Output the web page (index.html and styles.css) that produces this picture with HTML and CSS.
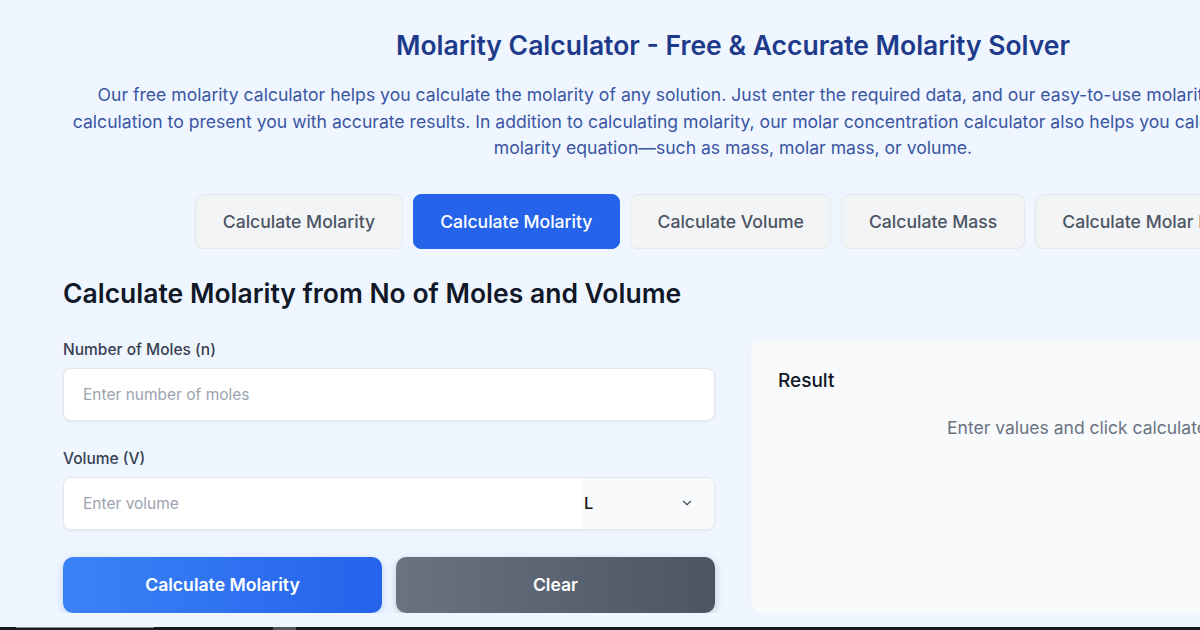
FILE: index.html
```html
<!DOCTYPE html>
<html lang="en">
<head>
<meta charset="utf-8">
<title>Molarity Calculator</title>
<link rel="stylesheet" href="styles.css">
</head>
<body>
<div class="page">
  <header class="intro">
    <h1 class="title">Molarity Calculator - Free &amp; Accurate Molarity Solver</h1>
    <p class="lead">Our free molarity calculator helps you calculate the molarity of any solution. Just enter the required data, and our easy-to-use molarity tool then does the<br>calculation to present you with accurate results. In addition to calculating molarity, our molar concentration calculator also helps you calculate key values in the<br>molarity equation—such as mass, molar mass, or volume.</p>
  </header>

  <nav class="tabs">
    <button class="tab">Calculate Molarity</button>
    <button class="tab active">Calculate Molarity</button>
    <button class="tab">Calculate Volume</button>
    <button class="tab">Calculate Mass</button>
    <button class="tab">Calculate Molar Mass</button>
  </nav>

  <h2 class="calc-title">Calculate Molarity from No of Moles and Volume</h2>

  <main class="calc">
    <section class="form">
      <div class="field">
        <label class="label">Number of Moles (n)</label>
        <div class="input-box">
          <input class="input" type="text" placeholder="Enter number of moles">
        </div>
      </div>
      <div class="field last">
        <label class="label">Volume (V)</label>
        <div class="input-box">
          <input class="input" type="text" placeholder="Enter volume">
          <div class="unit">
            <span class="unit-value">L</span>
            <svg class="chevron" width="14" height="14" viewBox="0 0 24 24" fill="none" stroke="currentColor" stroke-width="2.2" stroke-linecap="round" stroke-linejoin="round"><path d="M6 9l6 6 6-6"/></svg>
          </div>
        </div>
      </div>
      <div class="actions">
        <button class="btn btn-primary">Calculate Molarity</button>
        <button class="btn btn-secondary">Clear</button>
      </div>
    </section>

    <aside class="result">
      <h3 class="result-title">Result</h3>
      <p class="result-empty">Enter values and click calculate</p>
    </aside>
  </main>
</div>
<div class="taskbar"><span class="tb-tab"></span><span class="tb-item"></span></div>
</body>
</html>
```

FILE: styles.css
```css
html, body {
  margin: 0;
  padding: 0;
  overflow: hidden;
}
body {
  background: #eff6ff;
  font-family: Inter, "Noto Sans", "Liberation Sans", sans-serif;
  color: #111827;
}
.page {
  width: 1466px;
  box-sizing: border-box;
  padding: 0 63px;
}
.intro {
  text-align: center;
  padding-top: 28px;
}
.title {
  margin: 0;
  font-size: 26.5px;
  line-height: 34px;
  font-weight: 600;
  color: #1e3a8a;
}
.lead {
  margin: 20px 0 0;
  font-size: 17.6px;
  line-height: 26.5px;
  color: #3a55a2;
  white-space: nowrap;
}
.tabs {
  display: flex;
  justify-content: center;
  gap: 10px;
  margin-top: 32px;
}
.tab {
  height: 55px;
  padding: 0 26.5px;
  border: 1px solid #e5e7eb;
  border-radius: 8px;
  background: #f3f4f6;
  color: #4b5563;
  font-family: inherit;
  font-size: 17.6px;
  font-weight: 500;
  white-space: nowrap;
  flex-shrink: 0;
}
.tab.active {
  background: #2563eb;
  border-color: #2563eb;
  color: #ffffff;
}
.calc-title {
  margin: 27px 0 0;
  font-size: 26.5px;
  line-height: 34px;
  font-weight: 600;
  color: #111827;
}
.calc {
  display: grid;
  grid-template-columns: 1fr 1fr;
  gap: 36px;
  margin-top: 30px;
}
.form {
  display: flex;
  flex-direction: column;
}
.field {
  display: flex;
  flex-direction: column;
  margin-bottom: 28px;
}
.field.last {
  margin-bottom: 27px;
}
.label {
  font-size: 15.5px;
  line-height: 20px;
  font-weight: 500;
  color: #374151;
  margin-bottom: 8px;
}
.input-box {
  display: flex;
  height: 53px;
  box-sizing: border-box;
  border: 1px solid #e5e7eb;
  border-radius: 8px;
  background: #ffffff;
  box-shadow: 0 1px 3px rgba(15, 23, 42, 0.06);
  overflow: hidden;
}
.input {
  flex: 1;
  min-width: 0;
  border: 0;
  outline: 0;
  background: transparent;
  padding: 0 19px;
  font-family: inherit;
  font-size: 15.5px;
  color: #111827;
}
.input::placeholder {
  color: #9ca3af;
}
.unit {
  width: 131px;
  display: flex;
  align-items: center;
  justify-content: space-between;
  background: #f9fafb;
  padding: 0 20px 0 1px;
  box-sizing: border-box;
}
.unit-value {
  font-size: 16.5px;
  font-weight: 500;
  color: #111111;
}
.chevron {
  color: #4b5563;
}
.actions {
  display: grid;
  grid-template-columns: 1fr 1fr;
  gap: 14px;
}
.btn {
  height: 56px;
  border: 0;
  border-radius: 10px;
  font-family: inherit;
  font-size: 17.6px;
  font-weight: 600;
  color: #ffffff;
}
.btn-primary {
  background: linear-gradient(90deg, #3b82f6, #2563eb);
  box-shadow: 0 3px 8px rgba(37, 99, 235, 0.25);
}
.btn-secondary {
  background: linear-gradient(90deg, #6b7280, #4b5563);
  box-shadow: 0 3px 8px rgba(55, 65, 81, 0.25);
}
.result {
  background: #f8fafc;
  border-radius: 12px;
  padding: 29px 27px 24px;
  box-shadow: 0 1px 3px rgba(15, 23, 42, 0.03);
}
.result-title {
  margin: 0;
  font-size: 19px;
  line-height: 24px;
  font-weight: 500;
  color: #111827;
}
.result-empty {
  margin: 23px 0 0;
  text-align: center;
  font-size: 17.5px;
  line-height: 24px;
  color: #6b7280;
}
.taskbar {
  position: fixed;
  left: 0;
  right: 0;
  bottom: 0;
  height: 3px;
  background: #1b1a21;
  display: flex;
}
.tb-tab {
  margin-left: 16px;
  width: 138px;
  border-top: 1px solid #8a8a90;
  box-sizing: border-box;
}
.tb-item {
  margin-left: 119px;
  width: 23px;
  background: #55545a;
}
```
